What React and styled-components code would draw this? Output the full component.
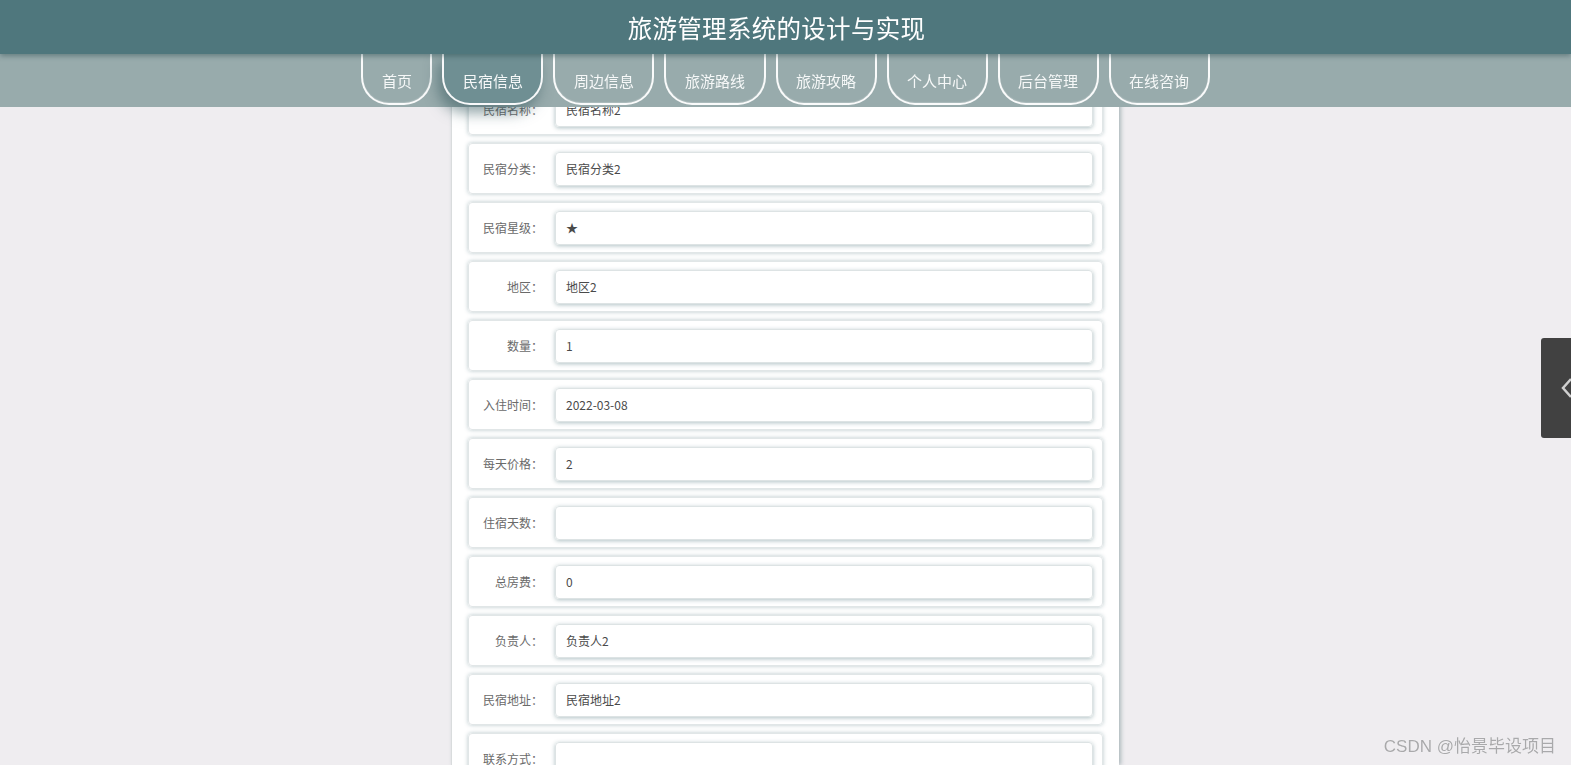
import React from "react";
import styled, { createGlobalStyle } from "styled-components";

const GlobalStyle = createGlobalStyle`
  html, body {
    margin: 0;
    padding: 0;
    background: #efedf0;
    font-family: "Noto Sans CJK SC", "Noto Sans", sans-serif;
    overflow: hidden;
  }
`;

const navItems = ["首页", "民宿信息", "周边信息", "旅游路线", "旅游攻略", "个人中心", "后台管理", "在线咨询"];

const fields = [
  { label: "民宿名称", value: "民宿名称2" },
  { label: "民宿分类", value: "民宿分类2" },
  { label: "民宿星级", value: "★" },
  { label: "地区", value: "地区2" },
  { label: "数量", value: "1" },
  { label: "入住时间", value: "2022-03-08" },
  { label: "每天价格", value: "2" },
  { label: "住宿天数", value: "" },
  { label: "总房费", value: "0" },
  { label: "负责人", value: "负责人2" },
  { label: "民宿地址", value: "民宿地址2" },
  { label: "联系方式", value: "" },
];

const TopBar = styled.header`
  position: fixed;
  top: 0;
  left: 0;
  right: 0;
  z-index: 10;
`;

const TitleBar = styled.div`
  height: 54px;
  background: #4f777d;
  display: flex;
  align-items: center;
  justify-content: center;
  padding-right: 18px;
  color: #fff;
  font-size: 24.5px;
  letter-spacing: 0.3px;
  box-shadow: 0 2px 5px rgba(40, 70, 75, 0.45);
  position: relative;
  z-index: 2;
`;

const NavBar = styled.nav`
  height: 53px;
  background: #98abac;
  display: flex;
  justify-content: center;
  gap: 10px;
`;

const NavTab = styled.a`
  height: 51px;
  padding: 3px 18.5px 0;
  display: flex;
  align-items: center;
  box-sizing: border-box;
  border: 2px solid rgba(255, 255, 255, 0.95);
  border-top: none;
  border-radius: 0 0 28px 28px;
  color: #f6f8f8;
  font-size: 15px;
  cursor: pointer;
  background: ${(p) => (p.$active ? "#6f8f93" : "transparent")};
  box-shadow: ${(p) =>
    p.$active ? "-4px 8px 14px rgba(55, 90, 95, 0.55)" : "inset 0 -1px 1px rgba(255,255,255,0.2)"};
`;

const Page = styled.main`
  display: flex;
  justify-content: center;
  height: 765px;
`;

const Panel = styled.section`
  width: 635px;
  margin-left: -1px;
  padding: 84px 16px 0;
  background: #fff;
  border-left: 1px solid #d9dcdd;
  box-shadow: 2px 0 4px rgba(90, 120, 125, 0.45);
  display: flex;
  flex-direction: column;
  gap: 8px;
`;

const FieldRow = styled.div`
  height: 51px;
  box-sizing: border-box;
  padding: 0 9px 0 10px;
  display: flex;
  align-items: center;
  border: 1px solid #e1e6e7;
  border-radius: 4px;
  box-shadow: 0 0 4px rgba(80, 118, 124, 0.4);
  flex-shrink: 0;
`;

const Label = styled.label`
  width: 64px;
  text-align: right;
  margin-right: 12px;
  font-size: 12px;
  color: #6a6a6a;
  white-space: nowrap;
`;

const Input = styled.div`
  flex: 1;
  height: 34px;
  box-sizing: border-box;
  padding: 0 10px;
  display: flex;
  align-items: center;
  border: 1px solid #dde3e4;
  border-radius: 4px;
  box-shadow: 0 1px 4px rgba(80, 118, 124, 0.45);
  font-size: 12px;
  color: #4a4a4a;
`;

const SideTab = styled.div`
  position: fixed;
  right: -10px;
  top: 338px;
  width: 40px;
  height: 100px;
  background: #414141;
  border-radius: 3px;
  display: flex;
  align-items: center;
  padding-left: 18px;
  box-sizing: border-box;
`;

const Watermark = styled.div`
  position: fixed;
  right: 15px;
  bottom: 8px;
  font-size: 17px;
  color: #a9a9ab;
  font-family: "Liberation Sans", "Noto Sans CJK SC", sans-serif;
  text-shadow: 0 0 1px rgba(255, 255, 255, 0.8);
`;

export default function App() {
  return (
    <>
      <GlobalStyle />
      <TopBar>
        <TitleBar>旅游管理系统的设计与实现</TitleBar>
        <NavBar>
          {navItems.map((item) => (
            <NavTab key={item} $active={item === "民宿信息"}>
              {item}
            </NavTab>
          ))}
        </NavBar>
      </TopBar>
      <Page>
        <Panel>
          {fields.map((f) => (
            <FieldRow key={f.label}>
              <Label>{f.label}：</Label>
              <Input>{f.value}</Input>
            </FieldRow>
          ))}
        </Panel>
      </Page>
      <SideTab>
        <svg width="16" height="22" viewBox="0 0 16 22">
          <path d="M12 2 L4 11 L12 20" fill="none" stroke="#d0d0d0" strokeWidth="2.5" />
        </svg>
      </SideTab>
      <Watermark>CSDN @怡景毕设项目</Watermark>
    </>
  );
}
